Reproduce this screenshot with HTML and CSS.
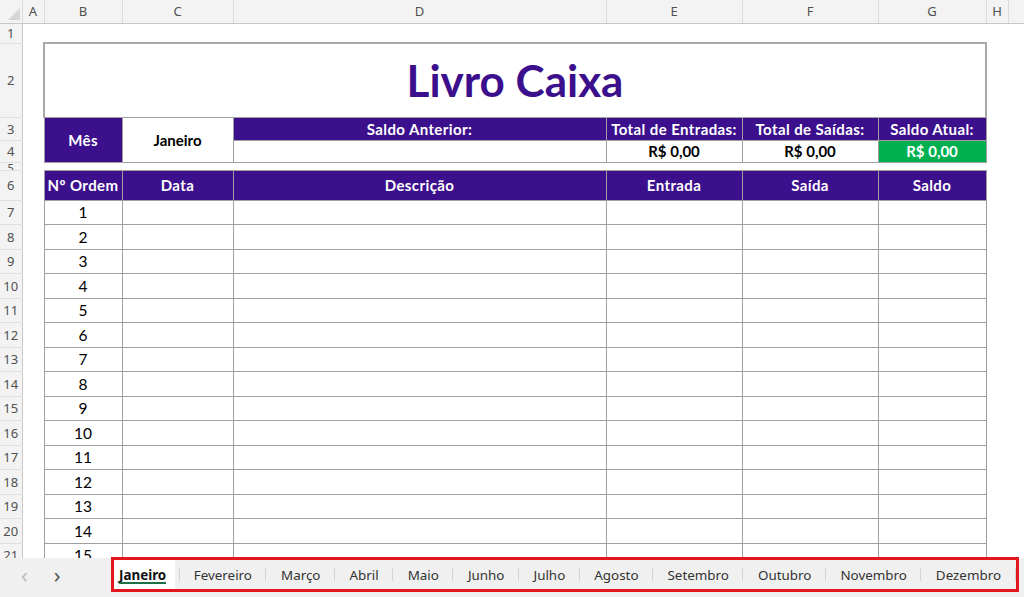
FILE: index.html
```html
<!DOCTYPE html>
<html lang="pt-BR">
<head>
  <meta charset="UTF-8" />
  <meta name="viewport" content="width=device-width, initial-scale=1.0"/>
  <title>Livro Caixa</title>
  <link rel="stylesheet" href="styles.css">
</head>
<body>
  <div class="app">
    <div class="sheet">
      <table class="grid">
        <colgroup>
          <col class="w-rh"><col class="w-a"><col class="w-b"><col class="w-c"><col class="w-d">
          <col class="w-e"><col class="w-f"><col class="w-g"><col class="w-h"><col class="w-i">
        </colgroup>
        <thead>
          <tr class="colhead">
            <th class="corner">
              <svg width="12" height="12" viewBox="0 0 12 12"><path d="M12 0 L12 12 L0 12 Z" fill="#d6d6d6"/></svg>
            </th>
            <th>A</th><th>B</th><th>C</th><th>D</th><th>E</th><th>F</th><th>G</th><th>H</th><th></th>
          </tr>
        </thead>
        <tbody>
          <tr class="r1"><th class="rh">1</th><td></td><td colspan="6"></td><td></td><td></td></tr>
          <tr class="r2">
            <th class="rh">2</th><td></td>
            <td colspan="6" class="title">Livro Caixa</td>
            <td></td><td></td>
          </tr>
          <tr class="r3">
            <th class="rh">3</th><td></td>
            <td rowspan="2" class="hd box">Mês</td>
            <td rowspan="2" class="month box">Janeiro</td>
            <td class="hd box">Saldo Anterior:</td>
            <td class="hd box">Total de Entradas:</td>
            <td class="hd box">Total de Saídas:</td>
            <td class="hd box">Saldo Atual:</td>
            <td></td><td></td>
          </tr>
          <tr class="r4">
            <th class="rh">4</th><td></td>
            <td class="val box"></td>
            <td class="val box">R$ 0,00</td>
            <td class="val box">R$ 0,00</td>
            <td class="val box saldo">R$ 0,00</td>
            <td></td><td></td>
          </tr>
          <tr class="r5"><th class="rh">5</th><td></td><td colspan="6"></td><td></td><td></td></tr>
          <tr class="r6">
            <th class="rh">6</th><td></td>
            <td class="hd box">Nº Ordem</td>
            <td class="hd box">Data</td>
            <td class="hd box">Descrição</td>
            <td class="hd box">Entrada</td>
            <td class="hd box">Saída</td>
            <td class="hd box">Saldo</td>
            <td></td><td></td>
          </tr>
        </tbody>
        <tbody id="rows"></tbody>
      </table>
    </div>

    <div class="tabbar">
      <div class="nav">
        <span class="arrow off">&#x2039;</span>
        <span class="arrow">&#x203A;</span>
      </div>
      <div class="tabs">
        <span class="tab active">Janeiro</span>
        <span class="tab">Fevereiro</span>
        <span class="tab">Março</span>
        <span class="tab">Abril</span>
        <span class="tab">Maio</span>
        <span class="tab">Junho</span>
        <span class="tab">Julho</span>
        <span class="tab">Agosto</span>
        <span class="tab">Setembro</span>
        <span class="tab">Outubro</span>
        <span class="tab">Novembro</span>
        <span class="tab">Dezembro</span>
      </div>
    </div>
    <div class="status"></div>
  </div>

  <script>
    const rowsEl = document.getElementById('rows');
    for (let i = 1; i <= 15; i++) {
      const tr = document.createElement('tr');
      tr.className = 'data';
      tr.innerHTML =
        '<th class="rh">' + (i + 6) + '</th><td></td>' +
        '<td class="box num">' + i + '</td>' +
        '<td class="box"></td><td class="box"></td><td class="box"></td>' +
        '<td class="box"></td><td class="box"></td><td></td><td></td>';
      rowsEl.appendChild(tr);
    }
  </script>
</body>
</html>
```

FILE: styles.css
```css
* {
  box-sizing: border-box;
}

body {
  margin: 0;
  background: #fff;
  font-family: Lato, 'Noto Sans', sans-serif;
}

.app {
  width: 1024px;
  height: 597px;
  overflow: hidden;
  display: flex;
  flex-direction: column;
}

/* ---------- sheet ---------- */

.sheet {
  height: 558px;
  overflow: hidden;
  flex: none;
}

.grid {
  width: 1024px;
  table-layout: fixed;
  border-collapse: collapse;
}

.w-rh { width: 22px; }
.w-a { width: 22px; }
.w-b { width: 78px; }
.w-c { width: 111px; }
.w-d { width: 373px; }
.w-e { width: 136px; }
.w-f { width: 136px; }
.w-g { width: 108px; }
.w-h { width: 22px; }
.w-i { width: 16px; }

.grid td,
.grid th {
  padding: 0;
  overflow: hidden;
  white-space: nowrap;
}

.colhead th {
  height: 23px;
  background: #f3f3f3;
  color: #505050;
  font: 13px 'Noto Sans', sans-serif;
  font-weight: normal;
  border-right: 1px solid #dcdcdc;
  border-bottom: 1px solid #c8c8c8;
}

.colhead .corner {
  text-align: right;
  vertical-align: bottom;
  line-height: 0;
  padding: 0 2px 3px 0;
}

.rh {
  background: #f3f3f3;
  color: #505050;
  font: 13px 'Noto Sans', sans-serif;
  font-weight: normal;
  text-align: center;
  border-right: 1px solid #c8c8c8;
  border-bottom: 1px solid #e0e0e0;
}

.r1 { height: 20px; }
.r2 { height: 74px; }
.r3 { height: 23px; }
.r4 { height: 22px; }
.r5 { height: 8px; }
.r6 { height: 30px; }
.data { height: 24.5px; }

.r5 .rh {
  font-size: 11px;
  line-height: 4px;
  vertical-align: bottom;
}

.title {
  border: 2px solid #a9a9a9;
  border-bottom: none;
  text-align: center;
  color: #3c108c;
  font-size: 44px;
  font-weight: 700;
  padding-top: 8px;
}

.box {
  border: 1px solid #9f9f9f;
}

.hd {
  background: #3c108c;
  color: #fff;
  font-size: 15px;
  font-weight: 700;
  letter-spacing: 0.4px;
  text-align: center;
}

.month {
  text-align: center;
  font-size: 15px;
  font-weight: 700;
  color: #000;
}

.val {
  text-align: center;
  font-size: 15px;
  font-weight: 700;
  color: #000;
}

.saldo {
  background: #00b050;
  color: #fff;
}

.num {
  text-align: center;
  font-size: 15.5px;
  color: #000;
}

/* ---------- sheet tabs ---------- */

.tabbar {
  height: 34px;
  background: #f0f0f0;
  display: flex;
  align-items: stretch;
  flex: none;
}

.nav {
  width: 111px;
  display: flex;
  align-items: center;
  gap: 26px;
  padding-left: 21px;
  flex: none;
}

.arrow {
  font: 22px 'Noto Sans', sans-serif;
  color: #555;
  line-height: 1;
  margin-top: -3px;
}

.arrow.off {
  color: #bdbdbd;
}

.tabs {
  display: flex;
  border: 3px solid #e3161b;
  height: 35px;
  margin-top: -1px;
}

.tab {
  position: relative;
  display: flex;
  align-items: center;
  padding: 0 14.5px;
  font: 13.4px 'Noto Sans', sans-serif;
  color: #333;
}

.tab::after {
  content: '';
  position: absolute;
  right: 0;
  top: 8px;
  bottom: 8px;
  border-right: 1px solid #d4d4d4;
}

.tab.active {
  background: #fff;
  font-weight: 700;
  color: #111;
  padding: 0 9px 0 5px;
  margin-right: 4px;
}

.tab.active::before {
  content: '';
  position: absolute;
  left: 5px;
  right: 9px;
  bottom: 5px;
  border-bottom: 2px solid #1e7145;
}

.tab.active::after {
  right: -5px;
}

.status {
  flex: 1;
  background: #f0f0f0;
}
```
